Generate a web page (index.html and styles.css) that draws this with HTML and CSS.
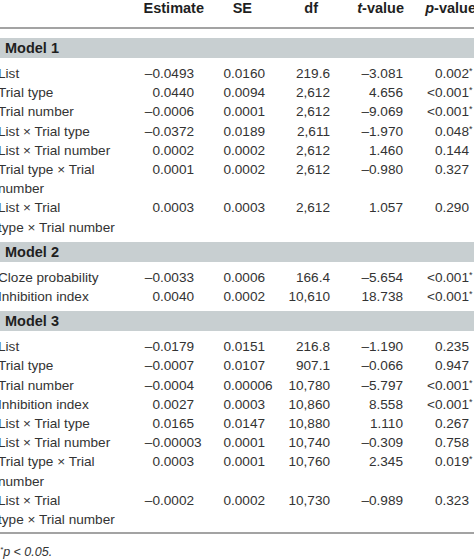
FILE: index.html
```html
<!DOCTYPE html>
<html>
<head>
<meta charset="utf-8">
<link rel="stylesheet" href="styles.css">
</head>
<body>
<div class="table">
  <div class="head">
    <div class="h">Estimate</div>
    <div class="h">SE</div>
    <div class="h">df</div>
    <div class="h"><i>t</i>-value</div>
    <div class="h"><i>p</i>-value</div>
  </div>

  <div class="band band-first">Model 1</div>
  <div class="rows">
    <div class="lab">List</div><div class="num">–0.0493</div><div class="num">0.0160</div><div class="num">219.6</div><div class="num">–3.081</div><div class="num">0.002<span class="star">*</span></div>
    <div class="lab">Trial type</div><div class="num">0.0440</div><div class="num">0.0094</div><div class="num">2,612</div><div class="num">4.656</div><div class="num">&lt;0.001<span class="star">*</span></div>
    <div class="lab">Trial number</div><div class="num">–0.0006</div><div class="num">0.0001</div><div class="num">2,612</div><div class="num">–9.069</div><div class="num">&lt;0.001<span class="star">*</span></div>
    <div class="lab">List × Trial type</div><div class="num">–0.0372</div><div class="num">0.0189</div><div class="num">2,611</div><div class="num">–1.970</div><div class="num">0.048<span class="star">*</span></div>
    <div class="lab">List × Trial number</div><div class="num">0.0002</div><div class="num">0.0002</div><div class="num">2,612</div><div class="num">1.460</div><div class="num">0.144</div>
    <div class="lab">Trial type × Trial<br>number</div><div class="num">0.0001</div><div class="num">0.0002</div><div class="num">2,612</div><div class="num">–0.980</div><div class="num">0.327</div>
    <div class="lab">List × Trial<br>type × Trial number</div><div class="num">0.0003</div><div class="num">0.0003</div><div class="num">2,612</div><div class="num">1.057</div><div class="num">0.290</div>
  </div>

  <div class="band">Model 2</div>
  <div class="rows">
    <div class="lab">Cloze probability</div><div class="num">–0.0033</div><div class="num">0.0006</div><div class="num">166.4</div><div class="num">–5.654</div><div class="num">&lt;0.001<span class="star">*</span></div>
    <div class="lab">Inhibition index</div><div class="num">0.0040</div><div class="num">0.0002</div><div class="num">10,610</div><div class="num">18.738</div><div class="num">&lt;0.001<span class="star">*</span></div>
  </div>

  <div class="band">Model 3</div>
  <div class="rows rows-last">
    <div class="lab">List</div><div class="num">–0.0179</div><div class="num">0.0151</div><div class="num">216.8</div><div class="num">–1.190</div><div class="num">0.235</div>
    <div class="lab">Trial type</div><div class="num">–0.0007</div><div class="num">0.0107</div><div class="num">907.1</div><div class="num">–0.066</div><div class="num">0.947</div>
    <div class="lab">Trial number</div><div class="num">–0.0004</div><div class="num">0.0000<span class="hang">6</span></div><div class="num">10,780</div><div class="num">–5.797</div><div class="num">&lt;0.001<span class="star">*</span></div>
    <div class="lab">Inhibition index</div><div class="num">0.0027</div><div class="num">0.0003</div><div class="num">10,860</div><div class="num">8.558</div><div class="num">&lt;0.001<span class="star">*</span></div>
    <div class="lab">List × Trial type</div><div class="num">0.0165</div><div class="num">0.0147</div><div class="num">10,880</div><div class="num">1.110</div><div class="num">0.267</div>
    <div class="lab">List × Trial number</div><div class="num">–0.0000<span class="hang">3</span></div><div class="num">0.0001</div><div class="num">10,740</div><div class="num">–0.309</div><div class="num">0.758</div>
    <div class="lab">Trial type × Trial<br>number</div><div class="num">0.0003</div><div class="num">0.0001</div><div class="num">10,760</div><div class="num">2.345</div><div class="num">0.019<span class="star">*</span></div>
    <div class="lab">List × Trial<br>type × Trial number</div><div class="num">–0.0002</div><div class="num">0.0002</div><div class="num">10,730</div><div class="num">–0.989</div><div class="num">0.323</div>
  </div>

  <div class="foot"><span class="fstar">*</span><i>p</i> &lt; 0.05.</div>
</div>
</body>
</html>
```

FILE: styles.css
```css
html, body {
  margin: 0;
  padding: 0;
  background: #ffffff;
}

body {
  overflow: hidden;
  font-family: "Liberation Sans", Arial, sans-serif;
  color: #333333;
}

.table {
  width: 474px;
  overflow: hidden;
}

.head {
  display: grid;
  grid-template-columns: 204px 48px 66px 86px 72px;
  font-weight: bold;
  font-size: 14.5px;
  line-height: 17px;
  color: #1f1f1f;
  padding-bottom: 10px;
  border-bottom: 2px solid #a3a3a3;
}

.h {
  text-align: right;
}

.band {
  background: #c8cfd1;
  height: 20px;
  line-height: 20px;
  font-weight: bold;
  font-size: 14.5px;
  color: #1f1f1f;
  padding-left: 5px;
  margin-top: 5px;
  margin-bottom: 6px;
}

.band-first {
  margin-top: 9px;
}

.rows {
  display: grid;
  grid-template-columns: 144px 52px 71px 65px 73px 66px;
  margin-left: -2px;
  font-size: 13.6px;
  line-height: 19.2px;
}

.rows-last {
  padding-bottom: 3px;
  border-bottom: 2px solid #a3a3a3;
  margin-left: 0;
  padding-left: 0;
}

.rows-last .lab {
  margin-left: -2px;
}

.rows-last {
  grid-template-columns: 142px 52px 71px 65px 73px 66px;
}

.lab {
  white-space: nowrap;
}

.num {
  text-align: right;
  white-space: nowrap;
}

.star {
  display: inline-block;
  width: 0;
  font-size: 9px;
  vertical-align: top;
  line-height: 14px;
}

.hang {
  display: inline-block;
  width: 0;
}

.foot {
  font-size: 12.5px;
  line-height: 16px;
  padding-top: 10px;
  color: #333333;
  font-style: italic;
}

.fstar {
  font-size: 8px;
  vertical-align: top;
  line-height: 12px;
}
```
